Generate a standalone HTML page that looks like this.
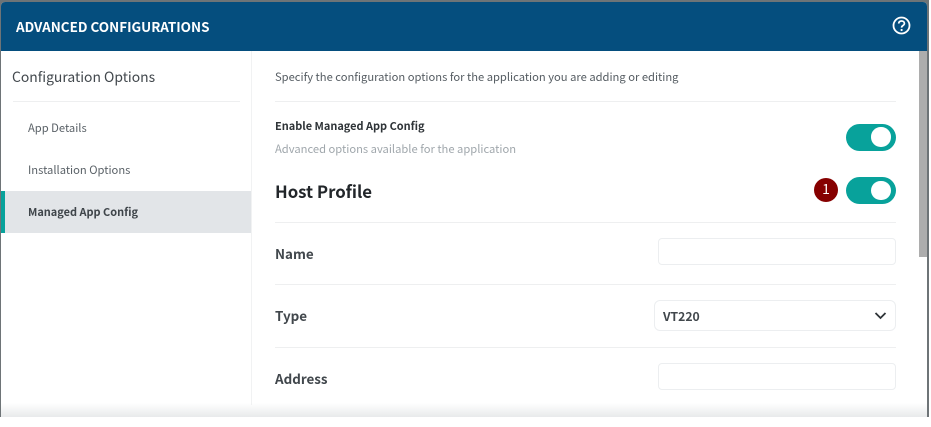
<!DOCTYPE html>
<html><head><meta charset="utf-8">
<style>
*{box-sizing:border-box}
html,body{margin:0;padding:0;width:931px;height:427px;overflow:hidden;background:#fff}
body{position:relative;font-family:"Noto Sans CJK SC","Liberation Sans",sans-serif}
.a{position:absolute}
.t{position:absolute;white-space:nowrap;line-height:20px;height:20px}
.hr{position:absolute;height:1px;background:#eeeff0}
.tg{position:absolute;left:845.5px;width:50px;height:27px;border-radius:14px;background:#08a29b}
.tg i{position:absolute;left:25.5px;top:3.5px;width:19.5px;height:19.5px;border-radius:50%;background:#fff}
.in{position:absolute;background:#fff;border:1px solid #eceef0;border-radius:4px}
</style></head><body>
<div class="a" style="left:0;top:0;width:929px;height:417px;background:#6e7477"></div>
<div class="a" style="left:1px;top:2px;width:926px;height:415px;background:#fff;border-radius:4px 4px 0 0;overflow:hidden">
  <div class="a" style="left:0;top:0;width:926px;height:49px;background:#054e7e"></div>
</div>
<div class="a" style="left:919px;top:51px;width:8px;height:206px;background:#adadad"></div>
<div class="t" style="left:16px;top:16px;font-size:13.45px;font-weight:700;color:#fff">ADVANCED CONFIGURATIONS</div>
<svg class="a" style="left:892px;top:16px" width="19" height="19" viewBox="0 0 19 19" fill="none">
  <circle cx="9.5" cy="9.5" r="8" stroke="#fff" stroke-width="1.8"/>
  <path d="M6.7 7.6C6.8 5.9 8 5 9.6 5c1.6 0 2.8 1 2.8 2.4 0 1-.6 1.6-1.4 2.1-.9.6-1.4 1-1.4 2.1" stroke="#fff" stroke-width="1.7"/>
  <circle cx="9.6" cy="14" r="1.1" fill="#fff"/>
</svg>

<div class="a" style="left:251px;top:51px;width:1px;height:354px;background:#f1f2f3"></div>
<div class="t" style="left:12px;top:67px;font-size:13.9px;color:#42484d">Configuration Options</div>
<div class="hr" style="left:13px;top:101px;width:227px"></div>
<div class="t" style="left:28px;top:117.5px;font-size:11.2px;color:#5a6167">App Details</div>
<div class="t" style="left:28px;top:159.5px;font-size:11.2px;color:#5a6167">Installation Options</div>
<div class="a" style="left:1px;top:191px;width:250px;height:42px;background:#e2e5e8"></div>
<div class="a" style="left:1px;top:191px;width:4px;height:42px;background:#08a29b"></div>
<div class="t" style="left:28px;top:202px;font-size:10.95px;font-weight:700;color:#3f454a">Managed App Config</div>

<div class="t" style="left:275px;top:66.5px;font-size:11.2px;color:#555c62">Specify the configuration options for the application you are adding or editing</div>
<div class="hr" style="left:275px;top:101px;width:621px"></div>
<div class="t" style="left:275px;top:115.5px;font-size:10.95px;font-weight:700;color:#2f3438">Enable Managed App Config</div>
<div class="t" style="left:275px;top:138.5px;font-size:11.2px;color:#a0a7ac">Advanced options available for the application</div>
<div class="tg" style="top:123.5px"><i></i></div>
<div class="t" style="left:275px;top:180.5px;font-size:16.8px;font-weight:700;color:#22262a">Host Profile</div>
<div class="a" style="left:814px;top:178px;width:24px;height:24px;border-radius:50%;background:#860000;color:#fff;font-size:14px;line-height:22px;text-align:center">1</div>
<div class="tg" style="top:177px"><i></i></div>
<div class="hr" style="left:275px;top:222px;width:621px"></div>

<div class="t" style="left:275px;top:243px;font-size:13.4px;font-weight:700;color:#41474c">Name</div>
<div class="in" style="left:658px;top:238px;width:238px;height:27px"></div>
<div class="hr" style="left:275px;top:284px;width:621px"></div>

<div class="t" style="left:275px;top:305px;font-size:13.4px;font-weight:700;color:#41474c">Type</div>
<div class="in" style="left:654px;top:300px;width:242px;height:31px;border-radius:6px"></div>
<div class="t" style="left:663px;top:305.5px;font-size:12.2px;font-weight:700;color:#41474c">VT220</div>
<svg class="a" style="left:874px;top:311px" width="13" height="10" viewBox="0 0 13 10" fill="none"><path d="M1.5 2l5 5 5-5" stroke="#2f3438" stroke-width="1.8"/></svg>
<div class="hr" style="left:275px;top:347px;width:621px"></div>

<div class="t" style="left:275px;top:368px;font-size:13.4px;font-weight:700;color:#41474c">Address</div>
<div class="in" style="left:658px;top:363px;width:238px;height:27px"></div>

<div class="a" style="left:1px;top:403px;width:926px;height:14px;background:linear-gradient(to bottom,rgba(232,234,235,0),#e8eaeb)"></div>
</body></html>
